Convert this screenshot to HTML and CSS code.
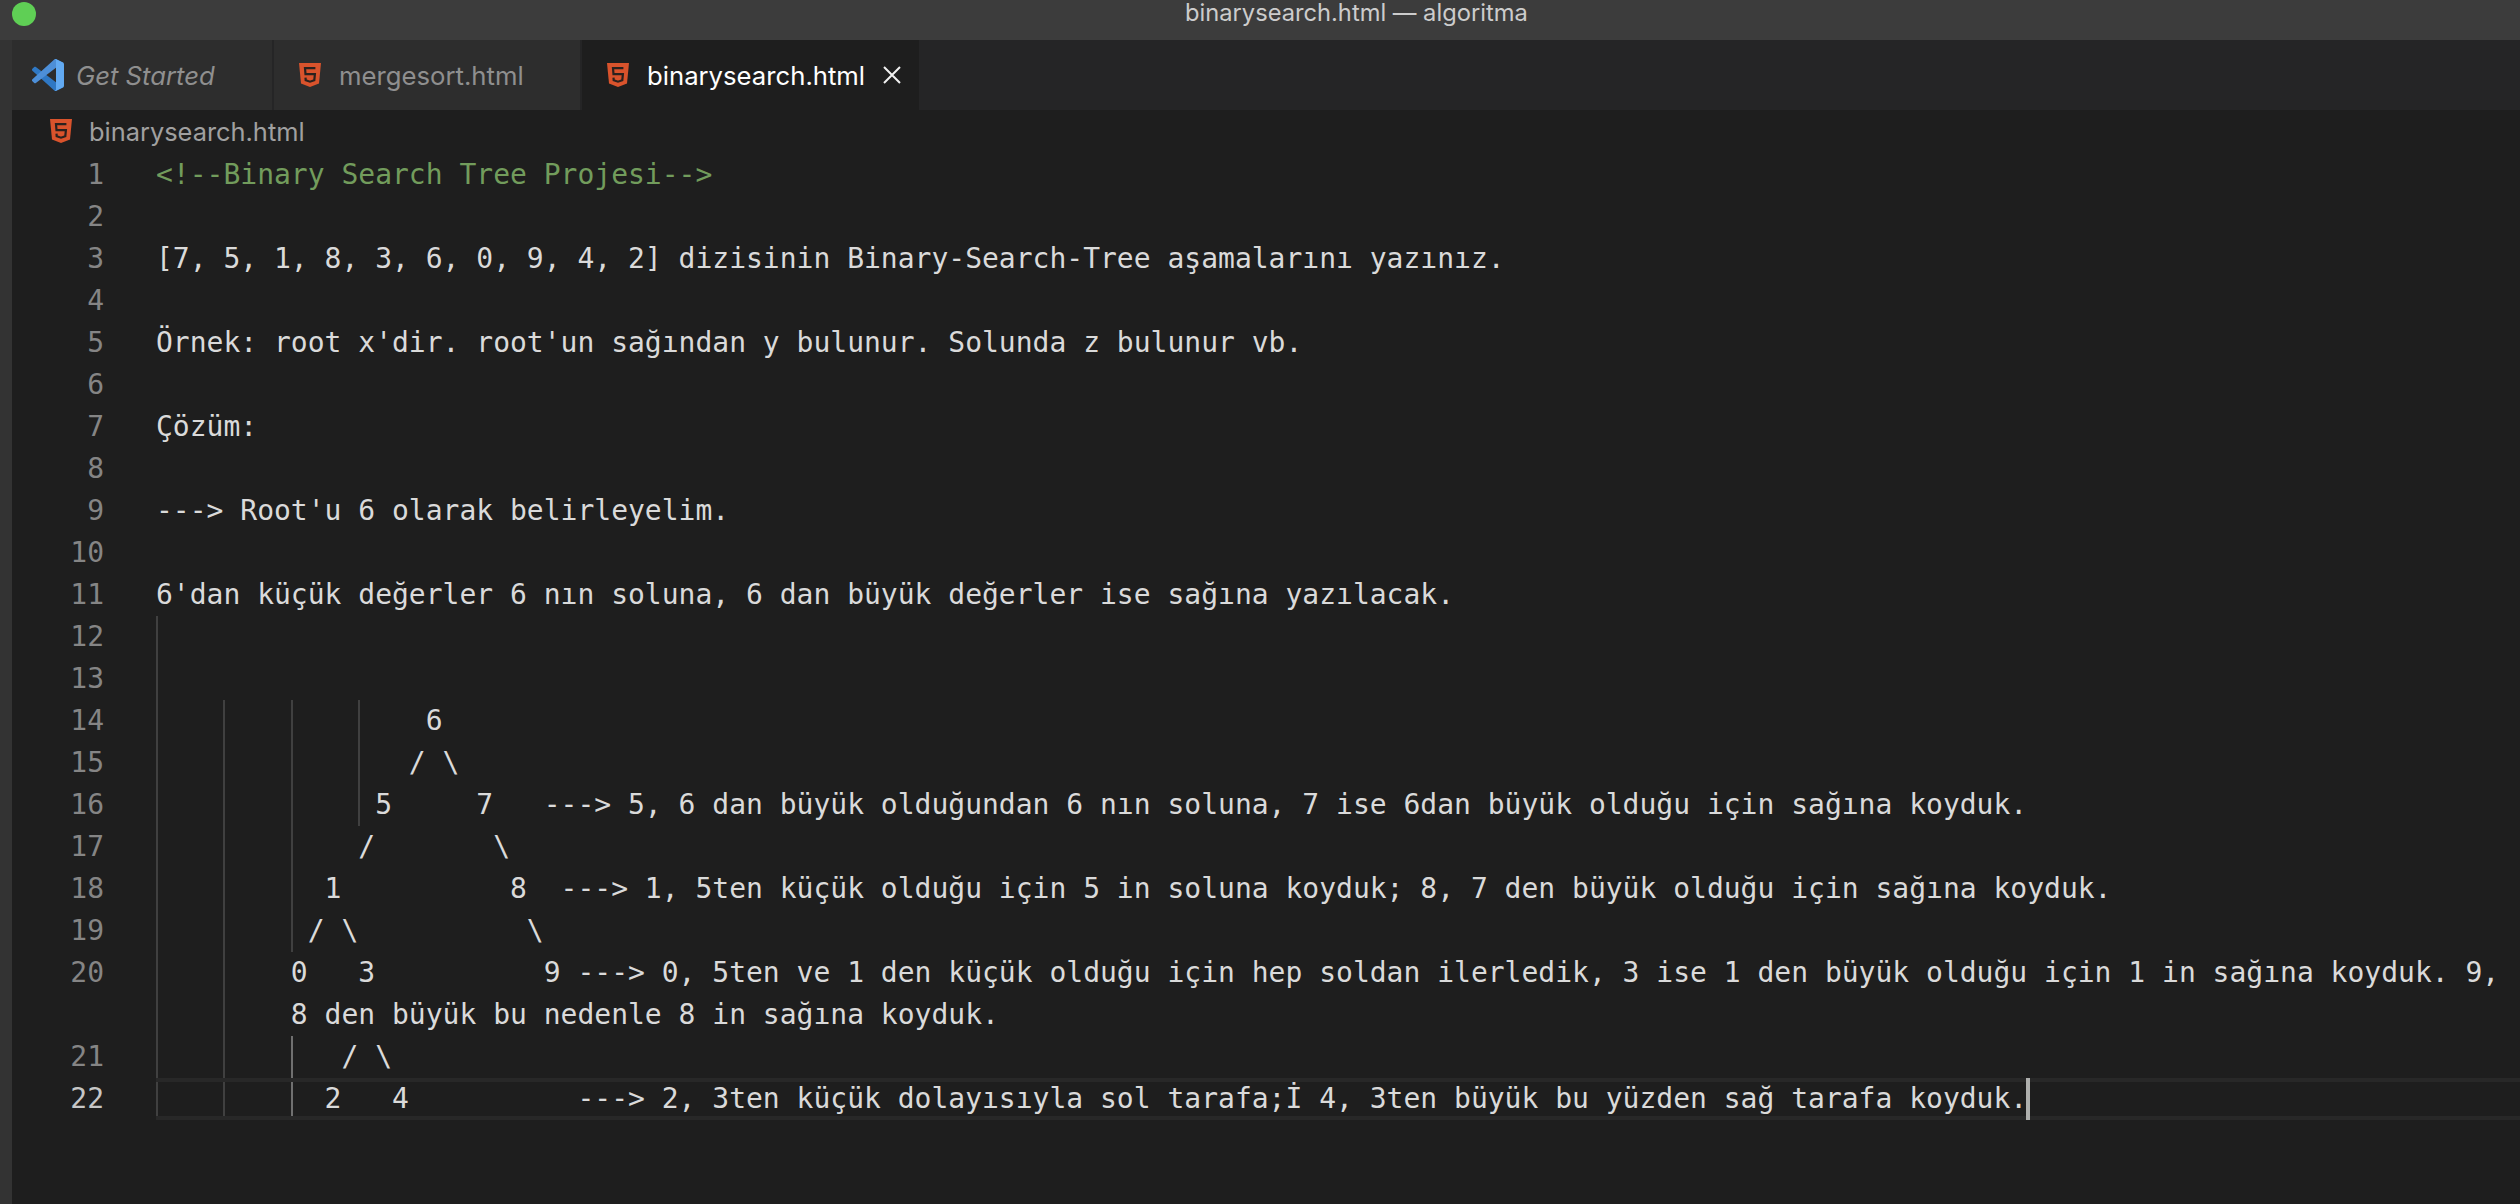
FILE: index.html
```html
<!DOCTYPE html>
<html lang="tr">
<head>
<meta charset="utf-8">
<title>binarysearch.html — algoritma</title>
<link rel="stylesheet" href="styles.css">
</head>
<body>
<svg class="defs" width="0" height="0" aria-hidden="true">
  <symbol id="html5" viewBox="0 0 22 24">
    <path fill="#d9532c" d="M0 0h22l-2 20.6L11 24l-9-3.4z"/>
    <path fill="none" stroke="#2a211e" stroke-width="2.2" d="M16.4 5.2H6l.5 6h9.4l-.6 6.1-4.3 1.4-4.3-1.4-.2-2.6"/>
  </symbol>
</svg>
<header class="titlebar">
  <span class="traffic"></span>
  <span class="window-title">binarysearch.html — algoritma</span>
</header>
<div class="workbench">
  <aside class="strip"></aside>
  <main class="editor">
    <nav class="tabs">
      <div class="tab tab-welcome">
        <svg class="icon-vscode" viewBox="0 0 100 100" aria-hidden="true">
          <path fill="#2f78c4" d="M96.46 89.2 75.86 99.12c-2.4 1.15-5.25.66-7.13-1.22L1.29 36.4c-1.81-1.65-1.81-4.5 0-6.15l5.51-5c1.48-1.35 3.72-1.45 5.32-.24l81.22 61.62c2.72 2.07 6.64.13 6.64-3.29v.24c0 2.4-1.37 4.58-3.52 5.62z"/>
          <path fill="#4d8fd8" d="M96.46 10.8 75.86.88c-2.4-1.15-5.25-.66-7.13 1.22L1.29 63.6c-1.81 1.65-1.81 4.5 0 6.15l5.51 5c1.48 1.35 3.72 1.45 5.32.24L93.34 13.37c2.72-2.07 6.64-.13 6.64 3.29v-.24c0-2.4-1.37-4.58-3.52-5.62z"/>
          <path fill="#62aaf2" d="M75.86 99.13c-2.4 1.15-5.25.66-7.13-1.22 2.31 2.31 6.27.67 6.27-2.6V4.69c0-3.27-3.96-4.91-6.27-2.6 1.88-1.88 4.73-2.37 7.13-1.22l20.6 9.9c2.15 1.03 3.52 3.21 3.52 5.6v67.25c0 2.39-1.37 4.57-3.52 5.61z"/>
        </svg>
        <span class="tab-label italic">Get Started</span>
      </div>
      <div class="tab tab-merge">
        <svg class="icon-html"><use href="#html5"/></svg>
        <span class="tab-label">mergesort.html</span>
      </div>
      <div class="tab tab-active">
        <svg class="icon-html"><use href="#html5"/></svg>
        <span class="tab-label">binarysearch.html</span>
        <svg class="icon-close" viewBox="0 0 18 18" aria-hidden="true"><path d="M1 1l16 16M17 1 1 17"/></svg>
      </div>
    </nav>
    <div class="breadcrumb">
      <svg class="icon-html"><use href="#html5"/></svg>
      <span>binarysearch.html</span>
    </div>
    <section class="code">
<div class="row"><span class="num">1</span><span class="line comment">&lt;!--Binary Search Tree Projesi--&gt;</span></div>
<div class="row"><span class="num">2</span><span class="line"></span></div>
<div class="row"><span class="num">3</span><span class="line">[7, 5, 1, 8, 3, 6, 0, 9, 4, 2] dizisinin Binary-Search-Tree aşamalarını yazınız.</span></div>
<div class="row"><span class="num">4</span><span class="line"></span></div>
<div class="row"><span class="num">5</span><span class="line">Örnek: root x'dir. root'un sağından y bulunur. Solunda z bulunur vb.</span></div>
<div class="row"><span class="num">6</span><span class="line"></span></div>
<div class="row"><span class="num">7</span><span class="line">Çözüm:</span></div>
<div class="row"><span class="num">8</span><span class="line"></span></div>
<div class="row"><span class="num">9</span><span class="line">---&gt; Root'u 6 olarak belirleyelim.</span></div>
<div class="row"><span class="num">10</span><span class="line"></span></div>
<div class="row"><span class="num">11</span><span class="line">6'dan küçük değerler 6 nın soluna, 6 dan büyük değerler ise sağına yazılacak.</span></div>
<div class="row"><span class="num">12</span><span class="line g1"></span></div>
<div class="row"><span class="num">13</span><span class="line g1"></span></div>
<div class="row"><span class="num">14</span><span class="line g4">                6</span></div>
<div class="row"><span class="num">15</span><span class="line g4">               / \</span></div>
<div class="row"><span class="num">16</span><span class="line g4">             5     7   ---&gt; 5, 6 dan büyük olduğundan 6 nın soluna, 7 ise 6dan büyük olduğu için sağına koyduk.</span></div>
<div class="row"><span class="num">17</span><span class="line g3">            /       \</span></div>
<div class="row"><span class="num">18</span><span class="line g3">          1          8  ---&gt; 1, 5ten küçük olduğu için 5 in soluna koyduk; 8, 7 den büyük olduğu için sağına koyduk.</span></div>
<div class="row"><span class="num">19</span><span class="line g3">         / \          \</span></div>
<div class="row"><span class="num">20</span><span class="line g2">        0   3          9 ---&gt; 0, 5ten ve 1 den küçük olduğu için hep soldan ilerledik, 3 ise 1 den büyük olduğu için 1 in sağına koyduk. 9,</span></div>
<div class="row"><span class="num"></span><span class="line g2">        8 den büyük bu nedenle 8 in sağına koyduk.</span></div>
<div class="row"><span class="num">21</span><span class="line g3-active">           / \</span></div>
<div class="row row-current"><span class="num">22</span><span class="line g3-active current">          2   4          ---&gt; 2, 3ten küçük dolayısıyla sol tarafa;İ 4, 3ten büyük bu yüzden sağ tarafa koyduk.<span class="caret"></span></span></div>
    </section>
  </main>
</div>
</body>
</html>
```

FILE: styles.css
```css
* { box-sizing: border-box; }
html, body { height: 100%; }
body {
  margin: 0;
  height: 1204px;
  overflow: hidden;
  display: flex;
  flex-direction: column;
  background: #1e1e1e;
  font-family: "Inter", "Liberation Sans", sans-serif;
}
.defs { position: absolute; }

.titlebar {
  height: 40px;
  flex: none;
  background: #3c3c3c;
  display: flex;
  align-items: flex-start;
  padding-left: 12px;
}
.traffic {
  width: 24px;
  height: 24px;
  margin-top: 2px;
  border-radius: 50%;
  background: #5fcf55;
  flex: none;
}
.window-title {
  margin-left: 1149px;
  font-size: 23.7px;
  line-height: 26px;
  color: #cccccc;
  white-space: nowrap;
}

.workbench { flex: 1; display: flex; min-height: 0; }
.strip { width: 12px; flex: none; background: #333333; }
.editor { flex: 1; min-width: 0; display: flex; flex-direction: column; }

.tabs { height: 70px; flex: none; display: flex; background: #252526; }
.tab {
  height: 70px;
  display: flex;
  align-items: center;
  background: #2d2d2d;
  border-right: 2px solid #252526;
  font-size: 25.7px;
  color: #8f8f8f;
  white-space: nowrap;
}
.tab-welcome { width: 262px; padding-left: 20px; gap: 12px; }
.tab-merge { width: 308px; padding-left: 25px; gap: 18px; }
.tab-active {
  width: 337px;
  padding-left: 25px;
  gap: 18px;
  background: #1e1e1e;
  color: #ffffff;
  border-right: 0;
}
.italic { font-style: italic; }
.icon-vscode { width: 32px; height: 32px; flex: none; }
.icon-html { width: 22px; height: 24px; flex: none; }
.icon-close {
  width: 18px;
  height: 18px;
  flex: none;
  fill: none;
  stroke: #f0f0f0;
  stroke-width: 2;
}

.breadcrumb {
  height: 44px;
  flex: none;
  padding: 0 0 2px 38px;
  display: flex;
  align-items: center;
  gap: 17px;
  font-size: 25.4px;
  color: #a0a0a0;
  white-space: nowrap;
}

.code {
  font-family: "DejaVu Sans Mono", monospace;
  font-size: 28px;
  line-height: 42px;
  color: #dadada;
}
.row { display: flex; height: 42px; }
.num {
  width: 92px;
  flex: none;
  text-align: right;
  color: #858585;
}
.line {
  flex: 1;
  min-width: 0;
  margin-left: 52px;
  white-space: pre;
  background-repeat: no-repeat;
  background-size: 2px 100%;
}
.comment { color: #729c5c; }
.row-current .num { color: #c6c6c6; }

.g1 {
  background-image: linear-gradient(#404040, #404040);
  background-position: 0 0;
}
.g2 {
  background-image: linear-gradient(#404040, #404040), linear-gradient(#404040, #404040);
  background-position: 0 0, 67px 0;
}
.g3 {
  background-image: linear-gradient(#404040, #404040), linear-gradient(#404040, #404040), linear-gradient(#404040, #404040);
  background-position: 0 0, 67px 0, 135px 0;
}
.g4 {
  background-image: linear-gradient(#404040, #404040), linear-gradient(#404040, #404040), linear-gradient(#404040, #404040), linear-gradient(#404040, #404040);
  background-position: 0 0, 67px 0, 135px 0, 202px 0;
}
.g3-active {
  background-image: linear-gradient(#404040, #404040), linear-gradient(#404040, #404040), linear-gradient(#707070, #707070);
  background-position: 0 0, 67px 0, 135px 0;
}
.current {
  border-top: 4px solid #282828;
  border-bottom: 4px solid #282828;
  line-height: 34px;
  background-origin: border-box;
  background-clip: border-box;
  position: relative;
}
.caret {
  position: absolute;
  top: -4px;
  bottom: -4px;
  width: 4px;
  margin-left: -1px;
  background: #aeafad;
}
```
